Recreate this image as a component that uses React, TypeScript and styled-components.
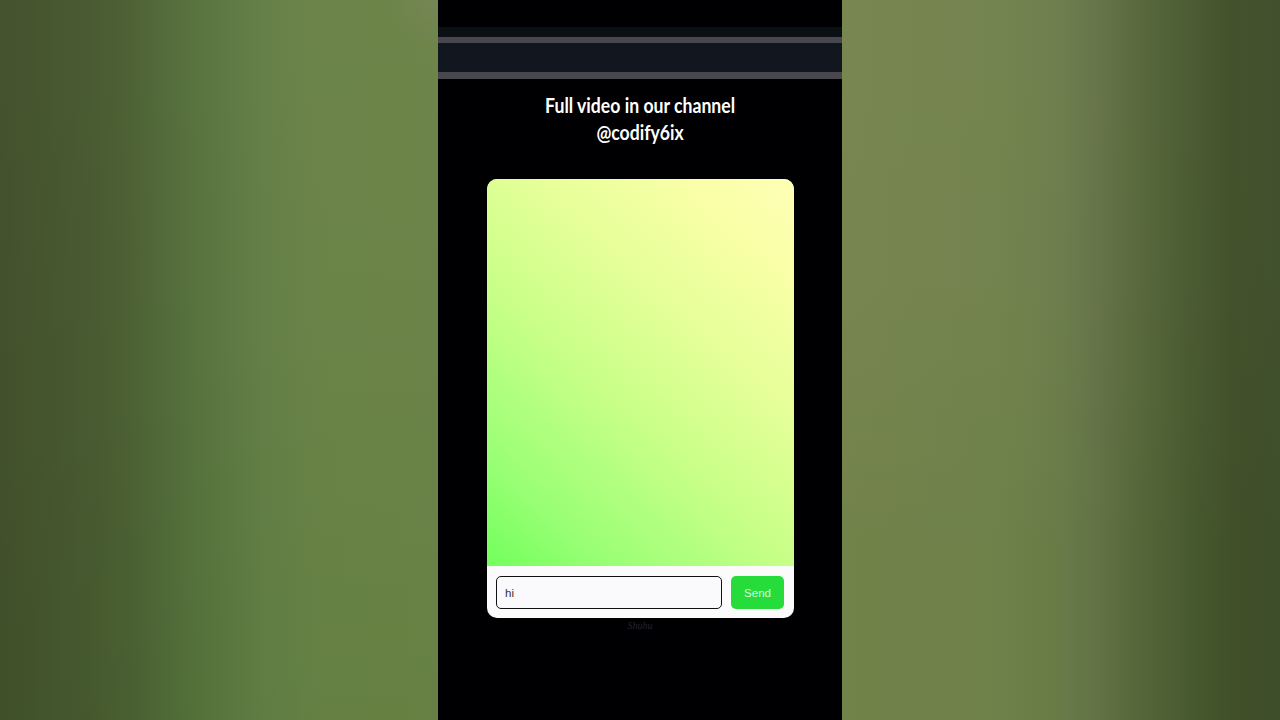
import React from 'react';
import styled, { createGlobalStyle } from 'styled-components';

const GlobalStyle = createGlobalStyle`
  html, body {
    margin: 0;
    padding: 0;
    background: #000;
  }
`;

const Page = styled.div`
  display: flex;
  width: 1280px;
  height: 720px;
  overflow: hidden;
`;

const LeftBlur = styled.div`
  width: 438px;
  background:
    radial-gradient(circle at 100% 0%, rgba(120, 134, 90, 0.8) 0, rgba(112, 134, 76, 0) 50px),
    linear-gradient(180deg, #fff 0%, #fbfdf9 40%, #eef8e8 100%),
    linear-gradient(90deg, #44522e 0%, #4a5b32 20%, #4e6236 30%, #5a7440 45%, #66804a 60%, #6c8449 72%, #6e844a 100%);
  background-blend-mode: normal, multiply, normal;
`;

const RightBlur = styled.div`
  width: 438px;
  background:
    linear-gradient(180deg, #fff 0%, #fdfefb 40%, #f2f9ea 75%, #f2f9ea 100%),
    linear-gradient(90deg, #788650 0%, #748450 36%, #6e7e4e 50%, #66744a 59%, #5c6c40 66%, #4c5c33 79%, #44522c 89%, #42502f 100%);
  background-blend-mode: multiply, normal;
`;

const Phone = styled.main`
  width: 404px;
  background: #000003;
  display: flex;
  flex-direction: column;
  align-items: center;
`;

const TopBand = styled.div`
  width: 100%;
  margin-top: 27px;
  height: 10px;
  background: #0b1014;
`;

const BarLine = styled.div<{ $height: number }>`
  width: 100%;
  height: ${({ $height }) => $height}px;
  background: #48474e;
`;

const MiddleBand = styled.div`
  width: 100%;
  height: 29px;
  background: #12161f;
`;

const Caption = styled.h1`
  margin: 12px 0 0;
  color: #fff;
  font-family: 'Lato', sans-serif;
  font-size: 21px;
  font-weight: 700;
  line-height: 27px;
  text-align: center;
  white-space: nowrap;
  transform: scaleX(0.84);
`;

const Card = styled.section`
  width: 307px;
  height: 439px;
  margin-top: 34px;
  border-radius: 10px;
  overflow: hidden;
  display: flex;
  flex-direction: column;
  background: #fbfbfb;
`;

const Gradient = styled.div`
  flex: 1;
  background: linear-gradient(42deg, #72ff5c 0%, #9cff76 18%, #c8ff88 42%, #e8ff9a 66%, #faffa8 86%, #feffb6 100%);
`;

const Composer = styled.form`
  height: 52px;
  box-sizing: border-box;
  padding: 10px 9.5px 9px;
  display: flex;
  gap: 9.5px;
`;

const Field = styled.input`
  flex: 1;
  min-width: 0;
  height: 33px;
  box-sizing: border-box;
  padding: 0 8px;
  border: 1.5px solid #111;
  border-radius: 5px;
  background: #fafafc;
  color: #333;
  font-family: 'Liberation Sans', sans-serif;
  font-size: 11.5px;
  outline: none;
`;

const SendButton = styled.button`
  width: 53px;
  height: 33px;
  padding: 0;
  border: 0;
  border-radius: 5px;
  background: #25dc3a;
  color: #dff8dc;
  font-family: 'Liberation Sans', sans-serif;
  font-size: 11.5px;
`;

const Credit = styled.div`
  margin-top: 2px;
  color: #24252b;
  font-family: 'Liberation Serif', serif;
  font-size: 10px;
  font-style: italic;
`;

export default function App() {
  return (
    <Page>
      <GlobalStyle />
      <LeftBlur />
      <Phone>
        <TopBand />
        <BarLine $height={6} />
        <MiddleBand />
        <BarLine $height={7} />
        <Caption>
          Full video in our channel
          <br />
          @codify6ix
        </Caption>
        <Card>
          <Gradient />
          <Composer>
            <Field defaultValue="hi" />
            <SendButton type="button">Send</SendButton>
          </Composer>
        </Card>
        <Credit>Shuhu</Credit>
      </Phone>
      <RightBlur />
    </Page>
  );
}
